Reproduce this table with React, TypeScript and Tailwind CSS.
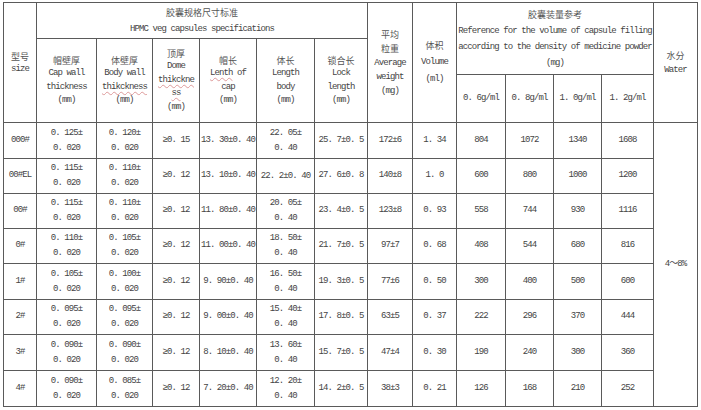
import React from "react";

const rows: { size: string; cw: string; bw: string; dome: string; cap: string; body: string[]; lock: string; avg: string; vol: string; f: string[] ; h: string}[] = [
  { size: "000#", cw: "0. 125±", bw: "0. 120±", dome: "≥0. 15", cap: "13. 30±0. 40", body: ["22. 05±", "0. 40"], lock: "25. 7±0. 5", avg: "172±6", vol: "1. 34", f: ["804", "1072", "1340", "1608"], h: "h-[36px]" },
  { size: "00#EL", cw: "0. 115±", bw: "0. 110±", dome: "≥0. 12", cap: "13. 10±0. 40", body: ["22. 2±0. 40"], lock: "27. 6±0. 8", avg: "140±8", vol: "1. 0", f: ["600", "800", "1000", "1200"], h: "h-[35px]" },
  { size: "00#", cw: "0. 115±", bw: "0. 110±", dome: "≥0. 12", cap: "11. 80±0. 40", body: ["20. 05±", "0. 40"], lock: "23. 4±0. 5", avg: "123±8", vol: "0. 93", f: ["558", "744", "930", "1116"], h: "h-[35px]" },
  { size: "0#", cw: "0. 110±", bw: "0. 105±", dome: "≥0. 12", cap: "11. 00±0. 40", body: ["18. 50±", "0. 40"], lock: "21. 7±0. 5", avg: "97±7", vol: "0. 68", f: ["408", "544", "680", "816"], h: "h-[35px]" },
  { size: "1#", cw: "0. 105±", bw: "0. 100±", dome: "≥0. 12", cap: "9. 90±0. 40", body: ["16. 50±", "0. 40"], lock: "19. 3±0. 5", avg: "77±6", vol: "0. 50", f: ["300", "400", "500", "600"], h: "h-[36px]" },
  { size: "2#", cw: "0. 095±", bw: "0. 095±", dome: "≥0. 12", cap: "9. 00±0. 40", body: ["15. 40±", "0. 40"], lock: "17. 8±0. 5", avg: "63±5", vol: "0. 37", f: ["222", "296", "370", "444"], h: "h-[35px]" },
  { size: "3#", cw: "0. 090±", bw: "0. 090±", dome: "≥0. 12", cap: "8. 10±0. 40", body: ["13. 60±", "0. 40"], lock: "15. 7±0. 5", avg: "47±4", vol: "0. 30", f: ["190", "240", "300", "360"], h: "h-[36px]" },
  { size: "4#", cw: "0. 090±", bw: "0. 085±", dome: "≥0. 12", cap: "7. 20±0. 40", body: ["12. 20±", "0. 40"], lock: "14. 2±0. 5", avg: "38±3", vol: "0. 21", f: ["126", "168", "210", "252"], h: "h-[36px]" },
];

const td = "border border-[#5a5a5a] p-0 text-center align-middle whitespace-nowrap overflow-visible";
const zh = "font-['Noto_Sans_CJK_SC',sans-serif] tracking-normal text-[9px] text-[#555]";
const wavy = "underline decoration-wavy decoration-[#d99] underline-offset-2";

function Zh({ children }: { children: React.ReactNode }) {
  return <div className={zh}>{children}</div>;
}

export default function App() {
  return (
    <div className="w-[701px] h-[410px] bg-white pl-[3px] pt-[2px] overflow-hidden">
      <table className="border-collapse table-fixed w-[694px] font-['Liberation_Mono','Noto_Sans_CJK_SC',monospace] text-[9px] tracking-[-0.9px] text-[#444]">
        <colgroup>
          <col className="w-[33px]" />
          <col className="w-[60px]" />
          <col className="w-[56px]" />
          <col className="w-[47px]" />
          <col className="w-[57px]" />
          <col className="w-[58px]" />
          <col className="w-[53px]" />
          <col className="w-[45px]" />
          <col className="w-[44px]" />
          <col className="w-[49px]" />
          <col className="w-[48px]" />
          <col className="w-[48px]" />
          <col className="w-[52px]" />
          <col className="w-[44px]" />
        </colgroup>
        <tbody>
          <tr className="h-[36px]">
            <td rowSpan={3} className={`${td} leading-[13px]`}>
              <Zh>型号</Zh>
              <div>size</div>
            </td>
            <td colSpan={6} className={`${td} leading-[16px]`}>
              <Zh>胶囊规格尺寸标准</Zh>
              <div>HPMC veg capsules specifications</div>
            </td>
            <td rowSpan={3} className={`${td} leading-[14px]`}>
              <Zh>平均</Zh>
              <Zh>粒重</Zh>
              <div>Average</div>
              <div>weight</div>
              <div>(mg)</div>
            </td>
            <td rowSpan={3} className={`${td} leading-[17px]`}>
              <Zh>体积</Zh>
              <div>Volume</div>
              <div>(ml)</div>
            </td>
            <td colSpan={4} rowSpan={2} className={`${td} leading-[16px]`}>
              <Zh>胶囊装量参考</Zh>
              <div>Reference for the volume of capsule filling</div>
              <div>according to the density of medicine powder</div>
              <div>(mg)</div>
            </td>
            <td rowSpan={3} className={`${td} leading-[14px]`}>
              <Zh>水分</Zh>
              <div>Water</div>
            </td>
          </tr>
          <tr className="h-[36px]">
            <td rowSpan={2} className={`${td} leading-[13.5px]`}>
              <Zh>帽壁厚</Zh>
              <div>Cap wall</div>
              <div>thickness</div>
              <div>(mm)</div>
            </td>
            <td rowSpan={2} className={`${td} leading-[13.5px]`}>
              <Zh>体壁厚</Zh>
              <div>Body wall</div>
              <div><span className={wavy}>thikckness</span></div>
              <div>(mm)</div>
            </td>
            <td rowSpan={2} className={`${td} leading-[13.5px]`}>
              <Zh>顶厚</Zh>
              <div>Dome</div>
              <div><span className={wavy}>thikckne</span></div>
              <div><span className={wavy}>ss</span></div>
              <div>(mm)</div>
            </td>
            <td rowSpan={2} className={`${td} leading-[13.5px]`}>
              <Zh>帽长</Zh>
              <div><span className={wavy}>Lenth</span> of</div>
              <div>cap</div>
              <div>(mm)</div>
            </td>
            <td rowSpan={2} className={`${td} leading-[13.5px]`}>
              <Zh>体长</Zh>
              <div>Length</div>
              <div>body</div>
              <div>(mm)</div>
            </td>
            <td rowSpan={2} className={`${td} leading-[13.5px]`}>
              <Zh>锁合长</Zh>
              <div>Lock</div>
              <div>length</div>
              <div>(mm)</div>
            </td>
          </tr>
          <tr className="h-[48px]">
            <td className={td}>0. 6g/ml</td>
            <td className={td}>0. 8g/ml</td>
            <td className={td}>1. 0g/ml</td>
            <td className={td}>1. 2g/ml</td>
          </tr>
          {rows.map((r, i) => (
            <tr key={r.size} className={r.h}>
              <td className={td}>{r.size}</td>
              <td className={`${td} leading-[15px]`}>
                <div>{r.cw}</div>
                <div>0. 020</div>
              </td>
              <td className={`${td} leading-[15px]`}>
                <div>{r.bw}</div>
                <div>0. 020</div>
              </td>
              <td className={td}>{r.dome}</td>
              <td className={td}>{r.cap}</td>
              <td className={`${td} leading-[15px]`}>
                {r.body.map((b) => (
                  <div key={b}>{b}</div>
                ))}
              </td>
              <td className={td}>{r.lock}</td>
              <td className={td}>{r.avg}</td>
              <td className={td}>{r.vol}</td>
              {r.f.map((v, j) => (
                <td key={j} className={td}>{v}</td>
              ))}
              {i === 0 && (
                <td rowSpan={8} className={td}>
                  4～8%
                </td>
              )}
            </tr>
          ))}
        </tbody>
      </table>
    </div>
  );
}
